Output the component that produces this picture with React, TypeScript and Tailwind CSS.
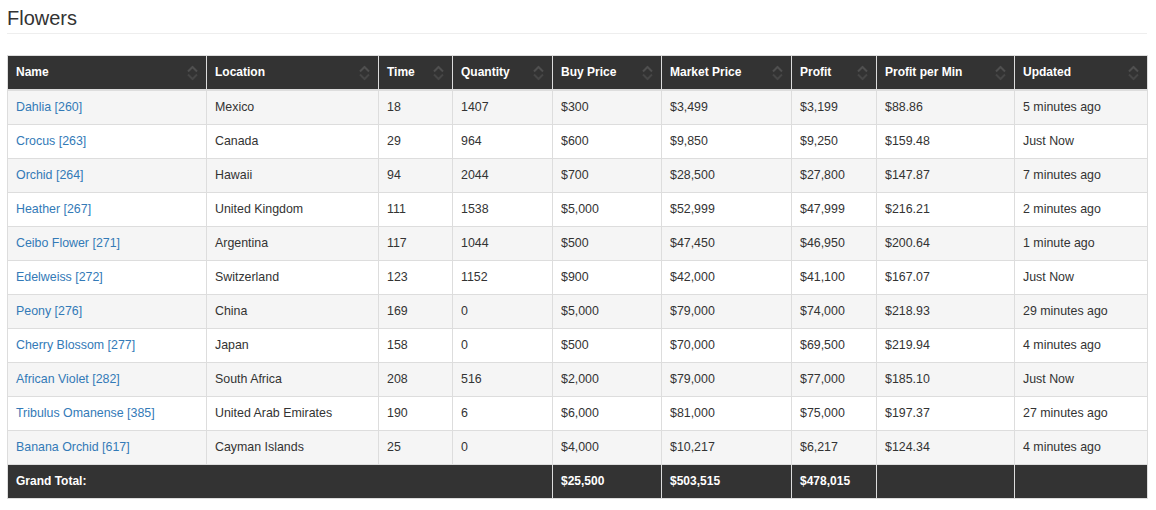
import React from "react";

const rows = [
  ["Dahlia [260]", "Mexico", "18", "1407", "$300", "$3,499", "$3,199", "$88.86", "5 minutes ago"],
  ["Crocus [263]", "Canada", "29", "964", "$600", "$9,850", "$9,250", "$159.48", "Just Now"],
  ["Orchid [264]", "Hawaii", "94", "2044", "$700", "$28,500", "$27,800", "$147.87", "7 minutes ago"],
  ["Heather [267]", "United Kingdom", "111", "1538", "$5,000", "$52,999", "$47,999", "$216.21", "2 minutes ago"],
  ["Ceibo Flower [271]", "Argentina", "117", "1044", "$500", "$47,450", "$46,950", "$200.64", "1 minute ago"],
  ["Edelweiss [272]", "Switzerland", "123", "1152", "$900", "$42,000", "$41,100", "$167.07", "Just Now"],
  ["Peony [276]", "China", "169", "0", "$5,000", "$79,000", "$74,000", "$218.93", "29 minutes ago"],
  ["Cherry Blossom [277]", "Japan", "158", "0", "$500", "$70,000", "$69,500", "$219.94", "4 minutes ago"],
  ["African Violet [282]", "South Africa", "208", "516", "$2,000", "$79,000", "$77,000", "$185.10", "Just Now"],
  ["Tribulus Omanense [385]", "United Arab Emirates", "190", "6", "$6,000", "$81,000", "$75,000", "$197.37", "27 minutes ago"],
  ["Banana Orchid [617]", "Cayman Islands", "25", "0", "$4,000", "$10,217", "$6,217", "$124.34", "4 minutes ago"],
];

const headers = ["Name", "Location", "Time", "Quantity", "Buy Price", "Market Price", "Profit", "Profit per Min", "Updated"];
const widths = [199, 172, 74, 100, 109, 130, 85, 138, 133];

function SortIcon() {
  return (
    <svg width="11" height="15" viewBox="0 0 11 15" className="absolute right-[8px] top-1/2 -translate-y-1/2">
      <polyline points="1,6 5.5,1.5 10,6" fill="none" stroke="#4f4f4f" strokeWidth="2" />
      <polyline points="1,9 5.5,13.5 10,9" fill="none" stroke="#464646" strokeWidth="2" />
    </svg>
  );
}

export default function App() {
  return (
    <div
      className="bg-white px-[7px] pt-[7px] pb-[10px] text-[#333]"
      style={{ fontFamily: '"Liberation Sans", Arial, Helvetica, sans-serif' }}
    >
      <h3 className="text-[20px] leading-[22px] font-normal pb-[4px] border-b border-[#eee] w-[1140px]">Flowers</h3>
      <table className="mt-[21px] w-[1140px] border-collapse table-fixed text-[12px] leading-[17px]">
        <colgroup>
          {widths.map((w, i) => (
            <col key={i} style={{ width: w }} />
          ))}
        </colgroup>
        <thead>
          <tr className="bg-[#333] text-white">
            {headers.map((h) => (
              <th key={h} className="relative text-left font-bold px-[8px] py-[8px] border border-[#ddd] border-b-2">
                {h}
                <SortIcon />
              </th>
            ))}
          </tr>
        </thead>
        <tbody>
          {rows.map((r, i) => (
            <tr key={i} className={i % 2 === 0 ? "bg-[#f5f5f5]" : "bg-white"}>
              {r.map((c, j) => (
                <td key={j} className="px-[8px] py-[8px] border border-[#ddd] whitespace-nowrap text-[12.4px]">
                  {j === 0 ? <a className="text-[#337ab7]">{c}</a> : c}
                </td>
              ))}
            </tr>
          ))}
        </tbody>
        <tfoot>
          <tr className="bg-[#333] text-white font-bold">
            <td colSpan={4} className="px-[8px] py-[8px] border border-[#ddd]">Grand Total:</td>
            <td className="px-[8px] py-[8px] border border-[#ddd]">$25,500</td>
            <td className="px-[8px] py-[8px] border border-[#ddd]">$503,515</td>
            <td className="px-[8px] py-[8px] border border-[#ddd]">$478,015</td>
            <td className="px-[8px] py-[8px] border border-[#ddd]"></td>
            <td className="px-[8px] py-[8px] border border-[#ddd]"></td>
          </tr>
        </tfoot>
      </table>
    </div>
  );
}
